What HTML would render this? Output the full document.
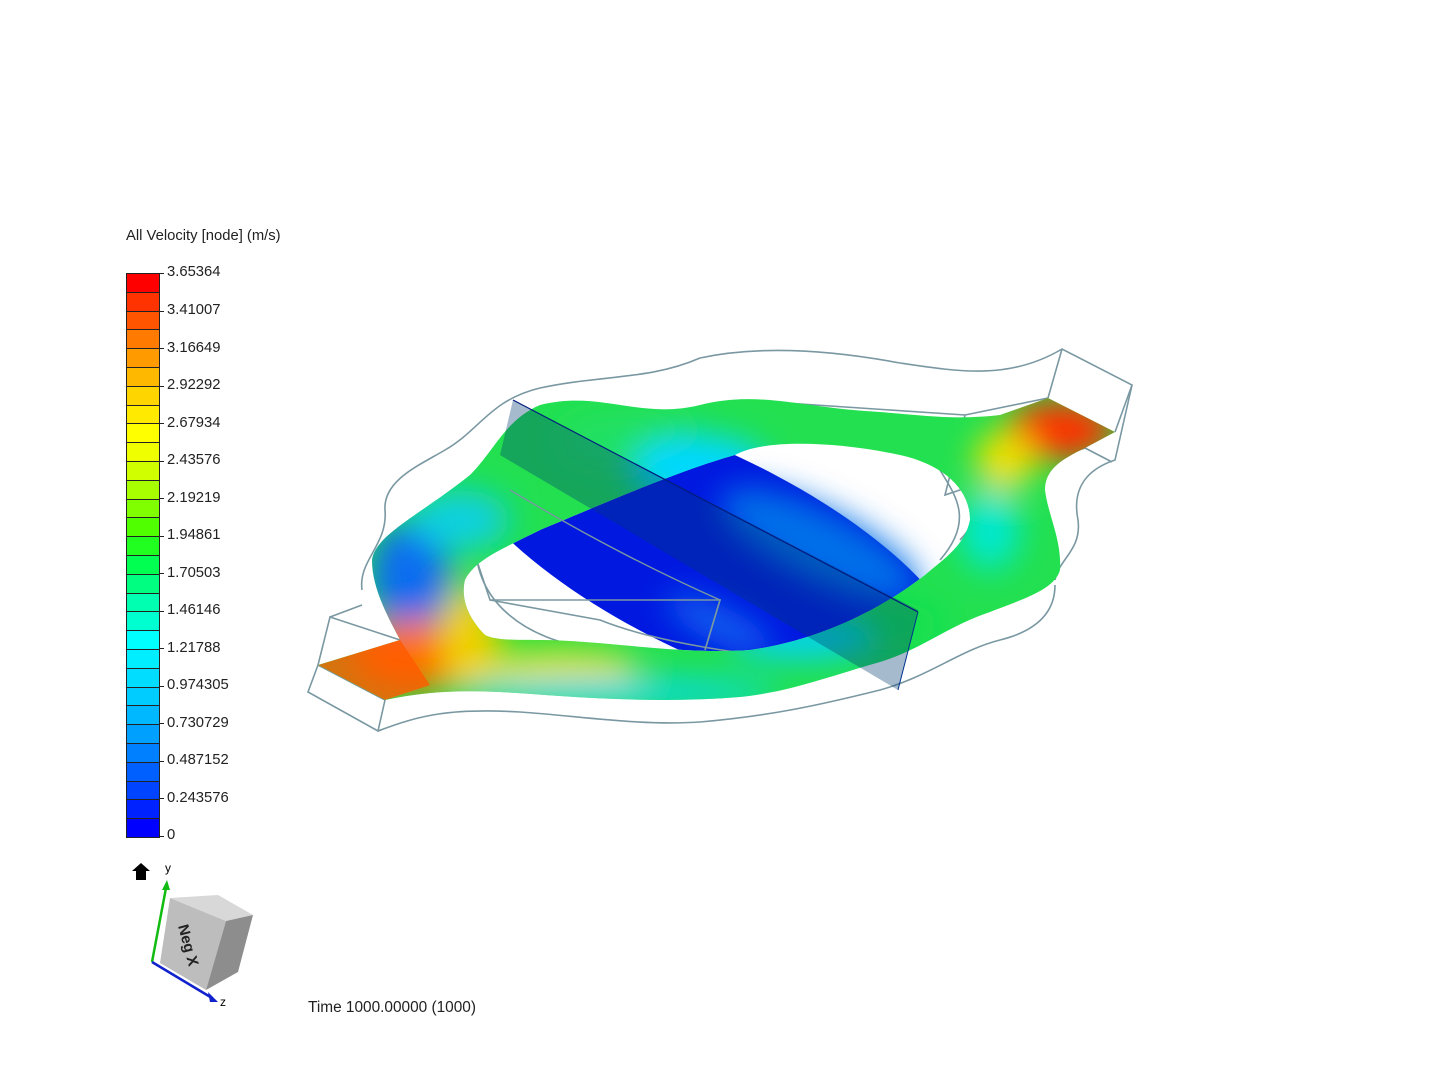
<!DOCTYPE html>
<html><head><meta charset="utf-8"><style>
html,body{margin:0;padding:0;background:#fff;width:1440px;height:1080px;overflow:hidden;font-family:"Liberation Sans",Arial,sans-serif;color:#222}
.t{position:absolute;font-size:14.8px}
#bar{position:absolute;left:126px;top:273px;width:32px;height:563px;border:1px solid #222;display:flex;flex-direction:column}
#bar div{flex:1;border-bottom:1px solid #222}
#bar div:last-child{border-bottom:none}
.tick{position:absolute;left:159px;width:5px;height:1px;background:#222}
</style></head><body>
<div class="t" style="left:126px;top:228px">All Velocity [node] (m/s)</div>
<div id="bar">
<div style="background:#FF0000"></div><div style="background:#FF3300"></div><div style="background:#FF5500"></div><div style="background:#FF7A00"></div><div style="background:#FF9A00"></div><div style="background:#FFB800"></div><div style="background:#FFD500"></div><div style="background:#FFEA00"></div><div style="background:#FFFF00"></div><div style="background:#F0FF00"></div><div style="background:#D0FF00"></div><div style="background:#A8FF00"></div><div style="background:#80FF00"></div><div style="background:#50FF00"></div><div style="background:#20FF20"></div><div style="background:#00FF50"></div><div style="background:#00FF80"></div><div style="background:#00FFB0"></div><div style="background:#00FFD0"></div><div style="background:#00FFFF"></div><div style="background:#00EEFF"></div><div style="background:#00DDFF"></div><div style="background:#00CCFF"></div><div style="background:#00B8FF"></div><div style="background:#00A0FF"></div><div style="background:#0080FF"></div><div style="background:#0060FF"></div><div style="background:#0044FF"></div><div style="background:#0022FF"></div><div style="background:#0000FF"></div>
</div>
<div class="t" style="left:167px;top:264px">3.65364</div>
<div class="t" style="left:167px;top:302px">3.41007</div>
<div class="t" style="left:167px;top:340px">3.16649</div>
<div class="t" style="left:167px;top:377px">2.92292</div>
<div class="t" style="left:167px;top:415px">2.67934</div>
<div class="t" style="left:167px;top:452px">2.43576</div>
<div class="t" style="left:167px;top:490px">2.19219</div>
<div class="t" style="left:167px;top:527px">1.94861</div>
<div class="t" style="left:167px;top:565px">1.70503</div>
<div class="t" style="left:167px;top:602px">1.46146</div>
<div class="t" style="left:167px;top:640px">1.21788</div>
<div class="t" style="left:167px;top:677px">0.974305</div>
<div class="t" style="left:167px;top:715px">0.730729</div>
<div class="t" style="left:167px;top:752px">0.487152</div>
<div class="t" style="left:167px;top:790px">0.243576</div>
<div class="t" style="left:167px;top:827px">0</div>
<div class="tick" style="top:273px"></div><div class="tick" style="top:311px"></div><div class="tick" style="top:348px"></div><div class="tick" style="top:386px"></div><div class="tick" style="top:423px"></div><div class="tick" style="top:461px"></div><div class="tick" style="top:498px"></div><div class="tick" style="top:536px"></div><div class="tick" style="top:573px"></div><div class="tick" style="top:611px"></div><div class="tick" style="top:648px"></div><div class="tick" style="top:686px"></div><div class="tick" style="top:723px"></div><div class="tick" style="top:761px"></div><div class="tick" style="top:798px"></div><div class="tick" style="top:836px"></div>
<div class="t" style="left:308px;top:999px;font-size:15.4px">Time 1000.00000 (1000)</div>

<svg width="1440" height="1080" style="position:absolute;left:0;top:0" xmlns="http://www.w3.org/2000/svg">
<defs>
<filter id="b" x="-50%" y="-50%" width="200%" height="200%"><feGaussianBlur stdDeviation="16"/></filter>
<clipPath id="band"><path clip-rule="evenodd" d="M318,665 L400,640 C390,620 372,590 372,560 C375,535 420,515 470,475 C495,450 505,420 540,405 C600,390 640,420 700,405 C760,390 800,408 880,412 C930,416 955,420 1000,415 L1048,398 L1115,432 L1085,448 C1060,460 1045,470 1045,490 C1048,515 1062,540 1060,570 C1055,590 1020,600 990,612 C950,625 920,650 880,662 C830,676 790,692 740,697 C680,702 620,700 560,696 C500,692 450,686 385,700 Z M485,635 C470,620 460,600 465,580 C475,560 500,550 540,530 C600,505 680,470 735,455 C760,440 830,440 900,455 C945,465 970,490 970,520 C965,545 945,558 925,575 C880,610 820,640 750,650 C680,655 600,640 540,640 C510,640 495,640 485,635 Z"/></clipPath>
<clipPath id="hole"><path d="M485,635 C470,620 460,600 465,580 C475,560 500,550 540,530 C600,505 680,470 735,455 C760,440 830,440 900,455 C945,465 970,490 970,520 C965,545 945,558 925,575 C880,610 820,640 750,650 C680,655 600,640 540,640 C510,640 495,640 485,635 Z"/></clipPath>
</defs>
<g clip-path="url(#hole)">
<ellipse cx="708" cy="553" rx="280" ry="100" transform="rotate(26 708 553)" fill="#0018e0"/>
<g filter="url(#b)">
<ellipse cx="820" cy="545" rx="110" ry="35" transform="rotate(26 820 545)" fill="#0070e8"/>
<ellipse cx="720" cy="625" rx="60" ry="18" transform="rotate(26 720 625)" fill="#1060f0"/>
</g>
</g>
<g fill="none" stroke="#7a98a2" stroke-width="1.6">
<path d="M362,590 C358,560 388,545 385,510 C383,480 420,465 445,450 C480,430 490,400 540,388 C600,375 650,380 700,358 C760,345 830,350 900,363 C960,372 1010,380 1062,349 L1132,385 L1115,460 C1085,470 1072,490 1078,520 C1082,550 1058,560 1055,580"/>
<path d="M378,731 C420,715 450,708 520,712 C580,716 640,726 700,722 C770,716 820,705 880,690 C930,676 960,650 1000,640 C1040,630 1055,610 1055,585"/>
<path d="M318,665 L330,617 L400,640 L385,700 L318,665 L308,692 L378,731 L385,700"/>
<path d="M330,617 L362,605 M1048,398 L1062,349 M1115,432 L1132,385 M1085,448 L1112,462 M1048,398 L965,415 L945,495 L1085,448"/>
<path d="M740,400 L965,415 M740,400 L730,450 M510,490 L475,555 L490,600 L720,600 L705,650"/>
<path d="M476,552 C480,600 520,640 600,650 L700,652 M490,600 L600,620 C650,640 750,660 850,660"/>
<path d="M940,470 C955,495 975,520 940,560 M960,440 C1000,470 980,520 960,540"/>
</g>
<g clip-path="url(#band)">
<rect x="300" y="380" width="840" height="340" fill="#22e050"/>
<g filter="url(#b)">
<ellipse cx="410" cy="575" rx="40" ry="55" fill="#0a6cf0"/>
<ellipse cx="460" cy="520" rx="50" ry="30" fill="#10d0e0"/>
<ellipse cx="420" cy="655" rx="70" ry="35" fill="#ff7000"/>
<ellipse cx="470" cy="640" rx="30" ry="55" fill="#f0d000"/>
<ellipse cx="560" cy="668" rx="80" ry="18" fill="#e8e000"/>
<ellipse cx="620" cy="692" rx="160" ry="12" fill="#00d8ff"/>
<ellipse cx="630" cy="440" rx="70" ry="25" fill="#22e066"/>
<ellipse cx="700" cy="470" rx="70" ry="35" fill="#00d8ff"/>
<ellipse cx="1060" cy="430" rx="55" ry="30" fill="#ff3000"/>
<ellipse cx="1005" cy="460" rx="30" ry="30" fill="#f0e000"/>
<ellipse cx="990" cy="530" rx="30" ry="40" fill="#00e8d0"/>
<ellipse cx="880" cy="625" rx="60" ry="25" fill="#10e050"/>
<ellipse cx="800" cy="640" rx="70" ry="18" fill="#00d0ff"/>
</g>
<path d="M318,665 L400,640 L430,685 L385,700 Z" fill="#ff5a00" opacity="0.8"/>
</g>
<polygon points="513,400 918,610 898,690 500,455" fill="#003870" opacity="0.35"/>
<line x1="513" y1="400" x2="918" y2="612" stroke="#001a80" stroke-width="1.2"/>
<line x1="918" y1="612" x2="898" y2="690" stroke="#003090" stroke-width="1"/>
<g fill="none" stroke="#7a98a2" stroke-width="1.4">
<path d="M510,490 C560,520 630,560 720,600 L705,650"/>
</g>
<polygon points="132,871 141,863 150,871 146,871 146,880 136,880 136,871" fill="#000"/>
<g>
<polygon points="170,898 218,895 253,915 226,921" fill="#d8d8d8"/>
<polygon points="170,898 226,921 206,990 160,963" fill="#bdbdbd"/>
<polygon points="226,921 253,915 238,972 206,990" fill="#8d8d8d"/>
<text x="0" y="0" font-size="15" font-weight="bold" transform="translate(178,926) rotate(75)" fill="#222">Neg X</text>
<line x1="152" y1="962" x2="166" y2="888" stroke="#11bb11" stroke-width="2.5"/>
<polygon points="162,890 170,890 167,880" fill="#11bb11"/>
<line x1="152" y1="962" x2="212" y2="998" stroke="#1122cc" stroke-width="2.5"/>
<polygon points="208,992 210,1002 218,1002" fill="#1122cc"/>
<text x="165" y="872" font-size="12">y</text>
<text x="220" y="1006" font-size="12">z</text>
</g>
</svg>
</body></html>
